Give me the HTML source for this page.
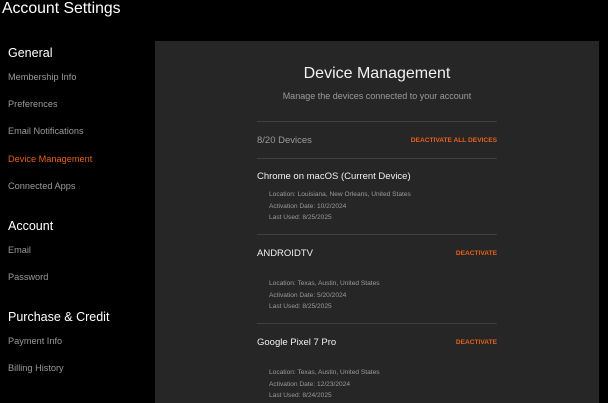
<!DOCTYPE html>
<html><head><meta charset="utf-8"><style>
html,body{margin:0;padding:0;background:#000;width:608px;height:403px;overflow:hidden;font-family:"Liberation Sans",sans-serif;}
.a{position:absolute;white-space:nowrap;line-height:1;}
.side{color:#9a9a9a;font-size:9.2px;left:8px;}
.h{color:#fff;font-size:12.5px;left:8px;}
#panel{position:absolute;left:155px;top:41px;width:444px;height:362px;background:#262626;}
.line{position:absolute;left:257px;width:240px;height:1px;background:#3f3f3f;}
.dn{color:#f0f0f0;font-size:9.5px;left:257px;}
.dd{color:#9a9a9a;font-size:6.6px;left:269px;}
.or{color:#e8601c;font-size:6.6px;font-weight:bold;right:111px;}
</style></head><body>
<div class="a" style="left:2px;top:1px;color:#fff;font-size:15.8px;">Account Settings</div>
<div class="a h" style="top:47px">General</div>
<div class="a side" style="top:73px">Membership Info</div>
<div class="a side" style="top:100px">Preferences</div>
<div class="a side" style="top:127px">Email Notifications</div>
<div class="a side" style="top:155px;color:#e8601c">Device Management</div>
<div class="a side" style="top:182px">Connected Apps</div>
<div class="a h" style="top:220px">Account</div>
<div class="a side" style="top:246px">Email</div>
<div class="a side" style="top:273px">Password</div>
<div class="a h" style="top:311px">Purchase &amp; Credit</div>
<div class="a side" style="top:337px">Payment Info</div>
<div class="a side" style="top:364px">Billing History</div>
<div id="panel"></div>
<div class="a" style="left:155px;width:444px;text-align:center;top:66px;color:#f0f0f0;font-size:16px;">Device Management</div>
<div class="a" style="left:155px;width:444px;text-align:center;top:92px;color:#9a9a9a;font-size:9px;">Manage the devices connected to your account</div>
<div class="line" style="top:121px"></div>
<div class="a" style="left:257px;top:136px;color:#9a9a9a;font-size:9.5px;">8/20 Devices</div>
<div class="a or" style="top:138px">DEACTIVATE ALL DEVICES</div>
<div class="line" style="top:158px"></div>
<div class="a dn" style="top:172px">Chrome on macOS (Current Device)</div>
<div class="a dd" style="top:192px">Location: Louisiana, New Orleans, United States</div>
<div class="a dd" style="top:204px">Activation Date: 10/2/2024</div>
<div class="a dd" style="top:215px">Last Used: 8/25/2025</div>
<div class="line" style="top:234px"></div>
<div class="a dn" style="top:249px">ANDROIDTV</div>
<div class="a or" style="top:251px">DEACTIVATE</div>
<div class="a dd" style="top:281px">Location: Texas, Austin, United States</div>
<div class="a dd" style="top:293px">Activation Date: 5/20/2024</div>
<div class="a dd" style="top:304px">Last Used: 8/25/2025</div>
<div class="line" style="top:323px"></div>
<div class="a dn" style="top:338px">Google Pixel 7 Pro</div>
<div class="a or" style="top:340px">DEACTIVATE</div>
<div class="a dd" style="top:370px">Location: Texas, Austin, United States</div>
<div class="a dd" style="top:382px">Activation Date: 12/23/2024</div>
<div class="a dd" style="top:393px">Last Used: 8/24/2025</div>
</body></html>
